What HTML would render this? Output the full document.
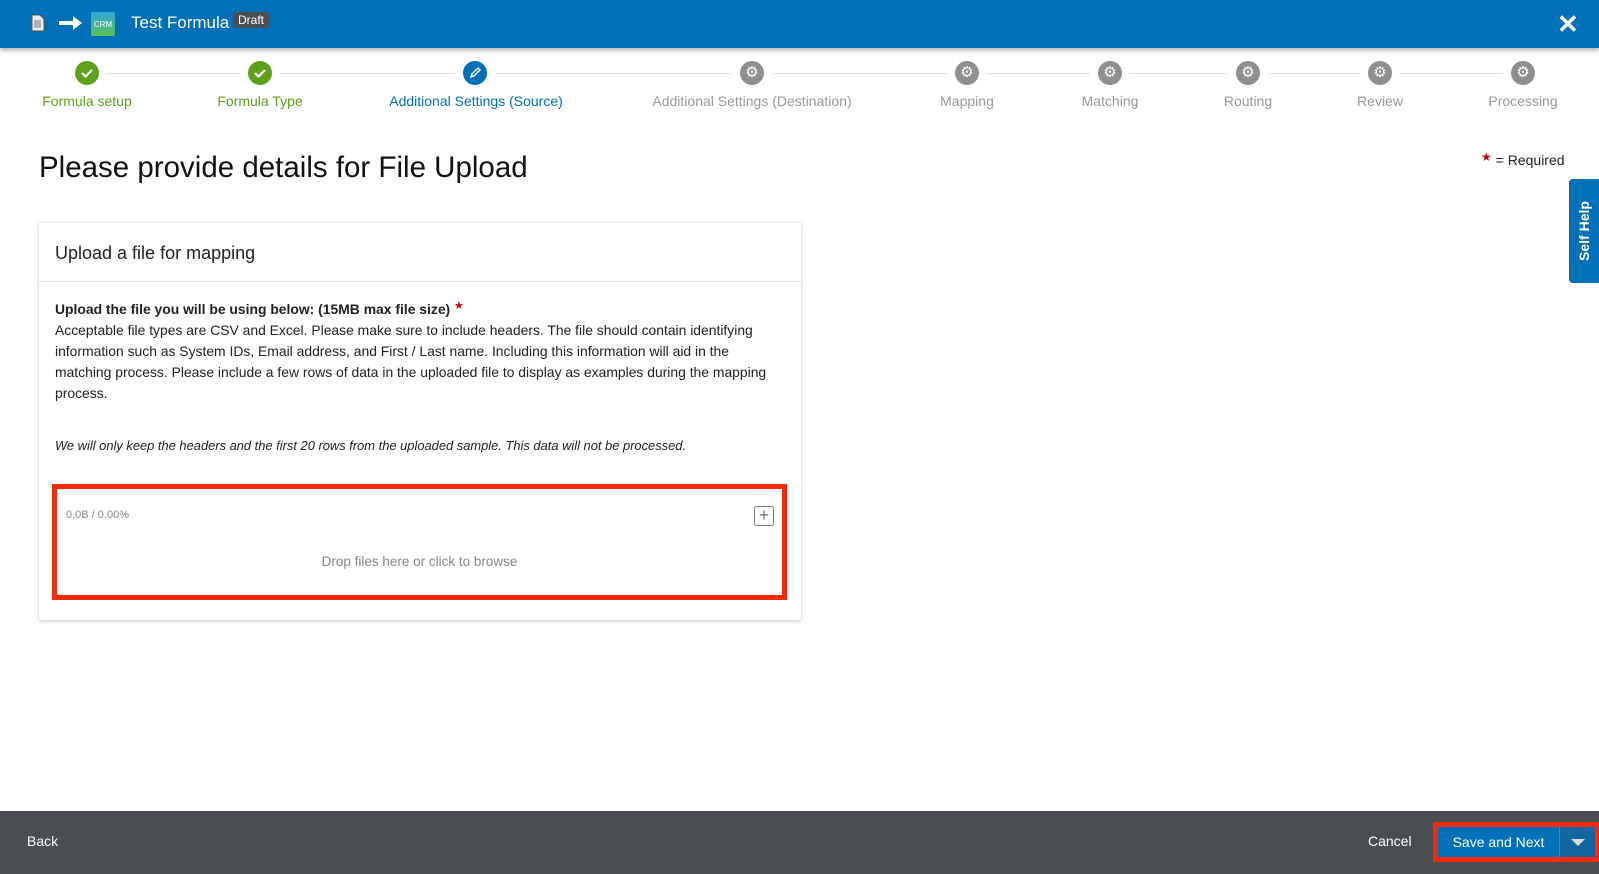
<!DOCTYPE html>
<html><head><style>
*{margin:0;padding:0;box-sizing:border-box}
body{width:1599px;height:874px;position:relative;overflow:hidden;background:#fff;font-family:"Liberation Sans",sans-serif;color:#222}
.abs{position:absolute}
.hdr{left:0;top:0;width:1599px;height:48px;background:#0070b8;box-shadow:0 2px 5px rgba(0,0,0,.35)}
.c{position:absolute;width:24px;height:24px;border-radius:50%;top:61px;margin-left:-12px}
.g{background:#8f8f8f;color:#fff;font-size:15px;text-align:center;line-height:24px}
.lbl{position:absolute;top:93px;font-size:14px;transform:translateX(-50%);white-space:nowrap}
.line{position:absolute;top:73px;height:1px;background:#ddd}
.foot{left:0;top:811px;width:1599px;height:63px;background:#4a4d52}
</style></head><body>
<div class="abs hdr">
  <svg class="abs" style="left:31px;top:14px" width="14" height="18" viewBox="0 0 14 18"><path d="M1 1h8l4 4v12H1z" fill="#eee" stroke="#555"/><path d="M3 7h7M3 9h7M3 11h7M3 13h7" stroke="#777"/></svg>
  <svg class="abs" style="left:59px;top:15px" width="24" height="16" viewBox="0 0 24 16"><path d="M0 6h14V1l9 7-9 7v-5H0z" fill="#fff"/></svg>
  <div class="abs" style="left:91px;top:12px;width:24px;height:24px;background:linear-gradient(#2fa8d8,#5cbf5a);border-radius:2px;color:#fff;font-size:8px;text-align:center;line-height:26px">CRM</div>
  <div class="abs" style="left:131px;top:13px;color:#fff;font-size:17px">Test Formula</div>
  <div class="abs" style="left:233px;top:12px;background:#4a4d52;color:#fff;font-size:12px;padding:1px 5px;border-radius:3px">Draft</div>
  <div class="abs" style="left:1557px;top:9px;color:#fff;font-size:26px;font-weight:bold">✕</div>
</div>
<div class="line" style="left:107px;width:133px"></div>
<div class="line" style="left:280px;width:175px"></div>
<div class="line" style="left:495px;width:237px"></div>
<div class="line" style="left:772px;width:175px"></div>
<div class="line" style="left:987px;width:103px"></div>
<div class="line" style="left:1130px;width:98px"></div>
<div class="line" style="left:1268px;width:92px"></div>
<div class="line" style="left:1400px;width:103px"></div>
<div class="c" style="left:87px;background:#5da11a"><svg width="24" height="24"><path d="M7 12l3.5 3.5L17 9" stroke="#fff" stroke-width="2.2" fill="none"/></svg></div>
<div class="c" style="left:260px;background:#5da11a"><svg width="24" height="24"><path d="M7 12l3.5 3.5L17 9" stroke="#fff" stroke-width="2.2" fill="none"/></svg></div>
<div class="c" style="left:475px;background:#0070b8"><svg width="24" height="24"><path d="M8 16l1-3 6-6 2 2-6 6z" stroke="#fff" stroke-width="1.5" fill="none"/></svg></div>
<div class="c g" style="left:752px">⚙</div>
<div class="c g" style="left:967px">⚙</div>
<div class="c g" style="left:1110px">⚙</div>
<div class="c g" style="left:1248px">⚙</div>
<div class="c g" style="left:1380px">⚙</div>
<div class="c g" style="left:1523px">⚙</div>
<div class="lbl" style="left:87px;color:#5da11a">Formula setup</div>
<div class="lbl" style="left:260px;color:#5da11a">Formula Type</div>
<div class="lbl" style="left:476px;color:#0070b8">Additional Settings (Source)</div>
<div class="lbl" style="left:752px;color:#999">Additional Settings (Destination)</div>
<div class="lbl" style="left:967px;color:#999">Mapping</div>
<div class="lbl" style="left:1110px;color:#999">Matching</div>
<div class="lbl" style="left:1248px;color:#999">Routing</div>
<div class="lbl" style="left:1380px;color:#999">Review</div>
<div class="lbl" style="left:1523px;color:#999">Processing</div>
<div class="abs" style="left:39px;top:151px;font-size:29.5px;color:#111">Please provide details for File Upload</div>
<div class="abs" style="left:1481px;top:150px;font-size:14px"><span style="color:#c00;font-size:12px;vertical-align:4px">★</span> = Required</div>
<div class="abs" style="left:1569px;top:179px;width:30px;height:104px;background:#0070b8;border-radius:4px 0 0 4px"><div style="position:absolute;left:50%;top:50%;transform:translate(-50%,-50%) rotate(-90deg);color:#fff;font-weight:bold;font-size:14px;white-space:nowrap">Self Help</div></div>
<div class="abs" style="left:39px;top:223px;width:762px;height:397px;background:#fff;box-shadow:0 1px 4px rgba(0,0,0,.25);border-radius:2px">
  <div style="height:59px;border-bottom:1px solid #e3e3e3;padding:20px 0 0 16px;font-size:18px;color:#222">Upload a file for mapping</div>
  <div style="padding:14px 16px 0 16px;font-size:13.9px;line-height:21px;color:#222">
    <b>Upload the file you will be using below: (15MB max file size)</b> <span style="color:#c00;font-size:11px;vertical-align:5px">★</span><br>
    Acceptable file types are CSV and Excel. Please make sure to include headers. The file should contain identifying information such as System IDs, Email address, and First / Last name. Including this information will aid in the matching process. Please include a few rows of data in the uploaded file to display as examples during the mapping process.
    <div style="margin-top:31px;font-style:italic;font-size:12.9px">We will only keep the headers and the first 20 rows from the uploaded sample. This data will not be processed.</div>
  </div>
</div>
<div class="abs" style="left:52px;top:484px;width:735px;height:116px;border:5px solid #f52a0a;background:#fff">
  <div class="abs" style="left:9px;top:20px;font-size:11px;color:#888">0.0B / 0.00%</div>
  <div class="abs" style="left:697px;top:17px;width:20px;height:20px;border:1.5px solid #777;border-radius:3px;text-align:center;line-height:16px;color:#777;font-size:18px">+</div>
  <div class="abs" style="left:0;width:725px;top:65px;text-align:center;font-size:13.5px;color:#888">Drop files here or click to browse</div>
</div>
<div class="abs foot">
  <div class="abs" style="left:27px;top:22px;color:#fff;font-size:14px">Back</div>
  <div class="abs" style="left:1368px;top:22px;color:#fff;font-size:14px">Cancel</div>
  <div class="abs" style="left:1433px;top:11px;height:40px;border:5px solid #f52a0a;width:167px;background:#0070b8">
    <div class="abs" style="left:0;top:0;width:121px;height:30px;text-align:center;line-height:30px;color:#fff;font-size:14px">Save and Next</div>
    <div class="abs" style="left:121px;top:0;width:36px;height:30px;background:#1466a0;border-left:1px solid #3f86bb"><div style="margin:12px auto 0;width:0;height:0;border-left:7px solid transparent;border-right:7px solid transparent;border-top:7px solid #ddd"></div></div>
  </div>
</div>
</body></html>
